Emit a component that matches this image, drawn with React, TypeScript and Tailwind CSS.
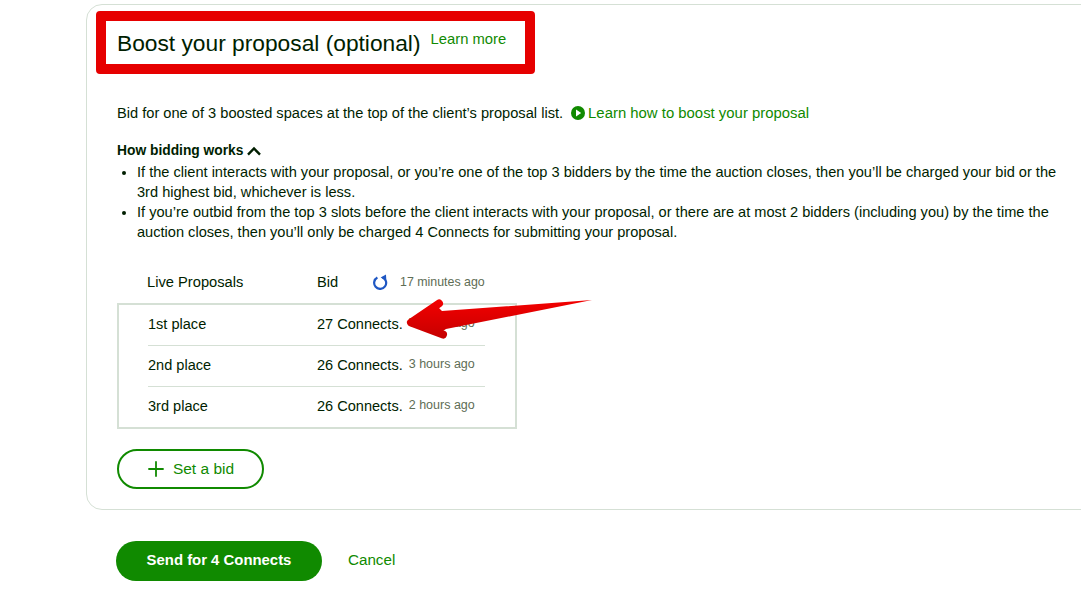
import React from 'react'
import { Plus } from 'lucide-react'

const rows = [
  { place: '1st place', bid: '27 Connects.', time: '7 hours ago' },
  { place: '2nd place', bid: '26 Connects.', time: '3 hours ago' },
  { place: '3rd place', bid: '26 Connects.', time: '2 hours ago' },
]

function App(): React.ReactElement {
  return (
    <div className="relative h-[616px] w-[1081px] overflow-hidden bg-white font-['Liberation_Sans',sans-serif] text-[14.63px] text-[#001e00]">
      {/* card runs off the right side of the page */}
      <div className="ml-[86px] mt-[4px] h-[506px] w-[1100px] rounded-2xl border border-[#d5e0d5] pl-[30px] pt-[6px]">
        <div className="-ml-[21px] flex h-[63px] w-[439px] items-start rounded-[4px] border-[10px] border-[#e60000] pl-[11px]">
          <h2 className="mt-[8px] text-[22.75px] leading-[28px]">Boost your proposal (optional)</h2>
          <a className="ml-[10px] mt-[8px] text-[14.8px] leading-5 text-[#108a00]">Learn more</a>
        </div>

        <p className="mt-[29px] flex h-5 items-center leading-5">
          <span>Bid for one of 3 boosted spaces at the top of the client’s proposal list.</span>
          <svg className="ml-[8px] mr-[3px]" width="14" height="14" viewBox="0 0 14 14">
            <circle cx="7" cy="7" r="7" fill="#108a00" />
            <path d="M5 3.6 10.2 7 5 10.4z" fill="#fff" />
          </svg>
          <a className="text-[14.9px] text-[#108a00]">Learn how to boost your proposal</a>
        </p>

        <div className="mt-[18px] flex h-5 items-center text-[13.8px] font-bold leading-5">
          How bidding works
          <svg className="ml-[4px]" width="14" height="10" viewBox="0 0 14 10" fill="none">
            <path d="M1 8.7 7 2.5l6 6.2" stroke="#001e00" strokeWidth="2.4" />
          </svg>
        </div>

        <ul className="mt-[1px] w-[950px] list-disc pl-[20px] text-[14.6px] leading-5">
          <li>If the client interacts with your proposal, or you’re one of the top 3 bidders by the time the auction closes, then you’ll be charged your bid or the 3rd highest bid, whichever is less.</li>
          <li>If you’re outbid from the top 3 slots before the client interacts with your proposal, or there are at most 2 bidders (including you) by the time the auction closes, then you’ll only be charged 4 Connects for submitting your proposal.</li>
        </ul>

        <div className="mt-[30px] flex h-5 items-center pl-[30px] text-[14.7px] leading-5">
          <span className="w-[170px]">Live Proposals</span>
          <span className="w-[56px]">Bid</span>
          <svg className="-mt-[1px]" width="15" height="16" viewBox="0 0 15 16" fill="none">
            <path d="M4.4 3.6A6 6 0 1 0 9.5 3.4" stroke="#1f57c3" strokeWidth="2.2" />
            <path d="M7.6 3.6 13 0.4l0.4 6.4z" fill="#1f57c3" />
          </svg>
          <span className="ml-[12px] text-[12.4px] text-[#5e6d55]">17 minutes ago</span>
        </div>

        <div className="mt-[11px] h-[126px] w-[400px] border-2 border-[#d5e0d5] pl-[29px] pr-[30px] text-[14.55px]">
          {rows.map((r, i) => (
            <div key={r.place} className={`flex h-[41px] items-center ${i < 2 ? 'border-b border-[#d5e0d5] pb-[1px]' : 'pb-[2px]'}`}>
              <span className="w-[169px]">{r.place}</span>
              <span>{r.bid}</span>
              <span className="ml-[6px] -mt-[3px] text-[12.5px] text-[#5e6d55]">{r.time}</span>
            </div>
          ))}
        </div>

        <button className="mt-[20px] flex h-[40px] w-[147px] items-center justify-center gap-[5px] rounded-full border-2 border-[#108a00] text-[15.5px] text-[#108a00]">
          <Plus className="-ml-[3px] size-[24px]" strokeWidth={1.8} />
          Set a bid
        </button>
      </div>

      <div className="ml-[116px] mt-[31px] flex items-center">
        <button className="h-[40px] w-[206px] rounded-full bg-[#108a00] pb-[2px] text-[14.9px] font-bold text-white">Send for 4 Connects</button>
        <a className="ml-[26px] pb-[2px] text-[15.2px] text-[#108a00]">Cancel</a>
      </div>

      {/* screenshot annotation */}
      <svg className="absolute left-[400px] top-[292px]" width="200" height="54" viewBox="400 292 200 54">
        <defs>
          <linearGradient id="arrowFill" gradientUnits="userSpaceOnUse" x1="0" y1="298" x2="0" y2="340">
            <stop offset="0" stopColor="#f50000" />
            <stop offset="1" stopColor="#c40000" />
          </linearGradient>
        </defs>
        <path d="M592 300 442 311 436 305 407 323 440 333 446 329z" fill="url(#arrowFill)" />
        <path
          d="M439 303.5 411 322.5 443 334.5"
          fill="none"
          stroke="url(#arrowFill)"
          strokeWidth="8"
          strokeLinecap="round"
          strokeLinejoin="round"
        />
      </svg>
    </div>
  )
}

export default App
